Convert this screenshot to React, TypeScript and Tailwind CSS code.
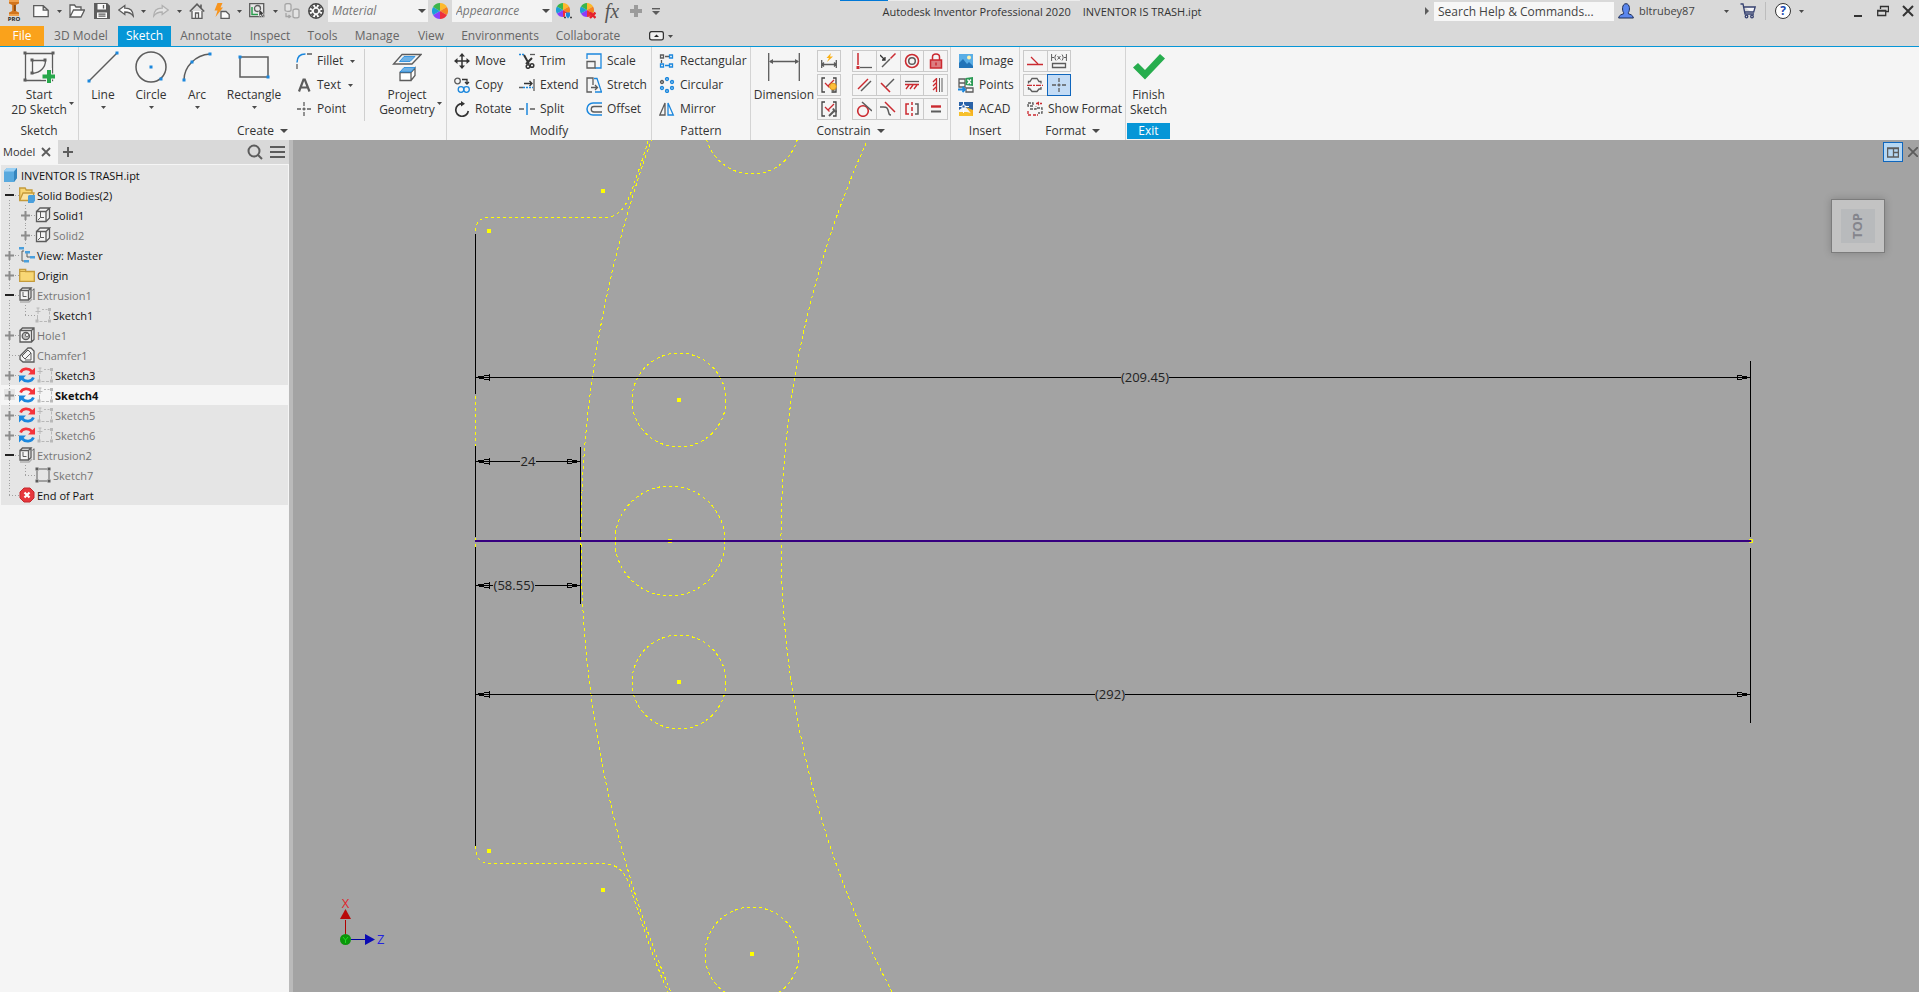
import React from "react";

const G = "#5c5c5c";
const B = "#1b87dd";
const R = "#cb2a30";

type IcoProps = { children: React.ReactNode; w?: number; h?: number; s?: string };

function Ico({ children, w = 16, h = 16, s = G }: IcoProps) {
  return (
    <svg width={w} height={h} viewBox={`0 0 ${w} ${h}`} fill="none" stroke={s} strokeWidth="1.3" className="shrink-0" aria-hidden="true">
      {children}
    </svg>
  );
}

function Caret({ small = false }: { small?: boolean }) {
  return small ? (
    <svg width="5" height="3" viewBox="0 0 5 3" className="shrink-0" aria-hidden="true">
      <path d="M0 0h5L2.500 3z" fill="#4a4a4a" />
    </svg>
  ) : (
    <svg width="8" height="4" viewBox="0 0 8 4" className="shrink-0" aria-hidden="true">
      <path d="M0 0h8L4 4z" fill="#4a4a4a" />
    </svg>
  );
}

function Dot({ x, y, c = B }: { x: number; y: number; c?: string }) {
  return <rect x={x - 1.5} y={y - 1.5} width="3" height="3" fill={c} stroke="none" />;
}

const wheelColors = ["#fdb92b", "#f58220", "#ee2f3c", "#8a3ffc", "#1c9fd8", "#3cb54a"];

function Wheel({ cx = 8, cy = 8, r = 8 }: { cx?: number; cy?: number; r?: number }) {
  return (
    <g stroke="none">
      {wheelColors.map((c, i) => {
        const a0 = ((i * 60 - 90) * Math.PI) / 180;
        const a1 = (((i + 1) * 60 - 90) * Math.PI) / 180;
        return (
          <path
            key={c}
            fill={c}
            d={`M${cx} ${cy}L${cx + r * Math.cos(a0)} ${cy + r * Math.sin(a0)}A${r} ${r} 0 0 1 ${cx + r * Math.cos(a1)} ${cy + r * Math.sin(a1)}z`}
          />
        );
      })}
    </g>
  );
}

function Tool({ label, children, w = "w-6" }: { label: string; children: React.ReactNode; w?: string }) {
  return (
    <button type="button" aria-label={label} className={`flex h-full shrink-0 items-center justify-center ${w}`}>
      {children}
    </button>
  );
}

function StyleSelect({ label }: { label: string }) {
  return (
    <div className="relative h-[22px] w-[100px] shrink-0 bg-[#f3f3f3]">
      <select aria-label={label} className="h-full w-full appearance-none bg-transparent pl-1 text-xs text-[#777] italic outline-none">
        <option>{label}</option>
      </select>
      <span className="pointer-events-none absolute top-[9px] right-[2px] block">
        <Caret />
      </span>
    </div>
  );
}

function TitleBar() {
  return (
    <div className="relative flex h-[26px] items-start">
      <div className="absolute top-0 left-[840px] flex h-px">
        <span className="w-12 bg-[#0078d7]" />
        <span className="w-48 bg-[#ececec]" />
      </div>
      <div className="flex h-[22px] shrink-0 items-center">
        <Tool label="Inventor" w="w-7">
          <span className="flex flex-col items-center">
            <svg width="12" height="16" viewBox="0 0 12 16" aria-hidden="true">
              <path d="M1 0h10v3.500L7.800 5v6L11 12.500V16H1v-3.500L4.200 11V5L1 3.500z" fill="#d2741c" />
              <path d="M1 0h10v2H1zM1 14h10v2H1z" fill="#f0a04b" />
              <path d="M6 5h1.800v6H6z" fill="#8d4a10" />
            </svg>
            <span className="text-[6px] leading-[6px] font-bold text-[#222]">PRO</span>
          </span>
        </Tool>
        <Tool label="New" w="w-[26px]">
          <Ico><path d="M.7 2.700h9.500l5 4.500v6.500H.7zM10.200 2.700v4.500h5" fill="#fafafa" /></Ico>
        </Tool>
        <Tool label="New options" w="w-[10px]"><Caret small /></Tool>
        <Tool label="Open" w="w-[26px]">
          <Ico><path d="M1 14V2h4.500l1.500 2h5v3M1 14l3.500-7H15.500L12 14z" fill="#fafafa" /></Ico>
        </Tool>
        <Tool label="Save">
          <Ico><path d="M.7.7h12.300l2.300 2.300v12.300H.7z" fill="#5c5c5c" /><path d="M3.500 1h8.500v5.500H3.500zM3 9.500h10V15H3z" fill="#fafafa" stroke="none" /><path d="M4.500 11.200h7M4.500 13.200h7M9.500 2v3.500" /></Ico>
        </Tool>
        <Tool label="Undo">
          <Ico><path d="M.8 7l6-4.500v2.700C12 5 15 8 15.300 13 13 9.800 10.500 9 6.800 9v2.500z" fill="#fafafa" /></Ico>
        </Tool>
        <Tool label="Undo history" w="w-[10px]"><Caret small /></Tool>
        <Tool label="Redo" w="w-[26px]">
          <Ico s="#b0b0b0"><path d="M15.200 7l-6-4.500v2.700C4 5 1 8 .7 13 3 9.800 5.500 9 9.200 9v2.500z" fill="#e2e2e2" /></Ico>
        </Tool>
        <Tool label="Redo history" w="w-[10px]"><Caret small /></Tool>
        <Tool label="Home" w="w-[26px]">
          <Ico><path d="M3 8v7.300h10V8" fill="#fafafa" /><path d="M.8 8.500L8 1.200l7.200 7.300M12 1.500v3.500" strokeWidth="1.600" /><path d="M6.500 15v-5h3v5" /></Ico>
        </Tool>
        <Tool label="Update">
          <Ico><path d="M3.500 0h5L6.500 4.500H9L1.500 14 3.500 7.500H.5z" fill="#f7941d" stroke="none" /><path d="M7 8.500h5l3.200 3v4H7z" fill="#fafafa" /></Ico>
        </Tool>
        <Tool label="Update options" w="w-[10px]"><Caret small /></Tool>
        <Tool label="Select" w="w-[26px]">
          <Ico><path d="M.7.700h14v13H.7z" fill="#e8e8e8" /><path d="M3 4v7.500h6" stroke="#2a9d4e" strokeWidth="1.500" /><circle cx="8.500" cy="5.500" r="3" /><path d="M10 6v7.500l1.800-1.700 1.200 3 1.500-.7-1.300-2.900H15.500z" fill="#3c3c3c" stroke="#fff" strokeWidth=".5" /></Ico>
        </Tool>
        <Tool label="Select options" w="w-[10px]"><Caret small /></Tool>
        <Tool label="Bodies">
          <Ico s="#a5a5a5"><path d="M1 2c0-2 6-2 6 0v5c0 1.800-6 1.800-6 0zM9 7.500c0-2 6-2 6 0v6c0 1.800-6 1.800-6 0z" fill="#e3e3e3" /><path d="M2 10v3.500h4M4.500 12l2 1.500-2 1.500" /></Ico>
        </Tool>
        <Tool label="Adjust wheel">
          <Ico><circle cx="8" cy="8" r="7.200" fill="#fafafa" stroke="#444" strokeWidth="1.500" /><circle cx="8" cy="8" r="2.200" fill="#555" stroke="none" /><path d="M3.500 3.500l2 2M12.500 3.500l-2 2M3.500 12.500l2-2M12.500 12.500l-2-2" stroke="#555" strokeWidth="2.600" /><path d="M1 8h2.500M12.500 8H15M8 1v2.500M8 12.500V15" stroke="#555" strokeWidth="2" /></Ico>
        </Tool>
        <StyleSelect label="Material" />
        <Tool label="Material browser"><Ico><Wheel /></Ico></Tool>
        <StyleSelect label="Appearance" />
        <Tool label="Adjust appearance"><Ico><Wheel cx={7} cy={7} r={7} /><path d="M9 10h7v6H9z" fill="#d9d9d9" stroke="none" /><path d="M10 9.500h4V13l-2 2.500L10 13z" fill={B} stroke="none" /><path d="M8 14.500h2M14 14.500h2" stroke="#444" /></Ico></Tool>
        <Tool label="Clear appearance"><Ico><Wheel cx={7} cy={7} r={7} /><path d="M10 9.500l5.500 5.500M15.500 9.500L10 15" stroke="#e5202b" strokeWidth="2.400" /></Ico></Tool>
        <Tool label="Parameters"><span className="font-[Liberation_Serif,serif] text-[20px] leading-4 text-[#555] italic">fx</span></Tool>
        <Tool label="Add"><Ico w={12} h={12}><path d="M6 0v12M0 6h12" stroke="#9b9b9b" strokeWidth="4" /></Ico></Tool>
        <Tool label="Customize" w="w-4"><Ico w={8} h={7}><path d="M0 .7h8" strokeWidth="1.400" /><path d="M0 3h8L4 7z" fill={G} stroke="none" /></Ico></Tool>
      </div>
      <h1 className="flex h-6 flex-1 items-center justify-center gap-3 text-[11px] whitespace-nowrap text-[#333]">
        <span>Autodesk Inventor Professional 2020</span>
        <span>INVENTOR IS TRASH.ipt</span>
      </h1>
      <div className="flex h-[22px] w-[499px] shrink-0 items-center">
        <Tool label="Collapse search" w="w-[14px]"><Ico w={4} h={8}><path d="M0 0l4 4-4 4z" fill={G} stroke="none" /></Ico></Tool>
        <input aria-label="Search" placeholder="Search Help & Commands..." className="mt-px h-[19px] w-[180px] bg-[#f7f7f7] px-1 text-xs outline-none placeholder:text-[#444]" />
        <button type="button" className="flex h-full w-[98px] items-center gap-[5px] pl-1 text-[11px] text-[#444]">
          <Ico><path d="M.6 15c.5-3 3-3.500 5-4.200v-1.300C4 7.800 3.800.7 8 .7s4 7.100 2.400 8.800v1.300c2 .7 4.500 1.200 5 4.200z" fill="#5b87ee" stroke="#1d2c55" strokeWidth="1" /></Ico>
          <span>bltrubey87</span>
        </button>
        <Tool label="Account options" w="w-7"><Caret small /></Tool>
        <Tool label="Cart" w="w-4">
          <Ico s="#35406f"><path d="M.5 1h2.500l2 10h9M3.500 4h11.700l-1.500 5H4.500" fill="#f4f4f8" /><circle cx="6.500" cy="13.500" r="1.300" /><circle cx="12" cy="13.500" r="1.300" /></Ico>
        </Tool>
        <span className="mx-[9px] h-[18px] w-px bg-[#bdbdbd]" />
        <Tool label="Help" w="w-4">
          <span className="flex size-4 items-center justify-center rounded-full border border-[#333] bg-white text-xs leading-3 font-bold text-[#1c49b0]">?</span>
        </Tool>
        <Tool label="Help options" w="w-5"><Caret small /></Tool>
        <div className="ml-auto flex">
          <Tool label="Minimize" w="w-[22px]"><Ico w={12} h={12}><path d="M2 11h8" stroke="#333" strokeWidth="2" /></Ico></Tool>
          <Tool label="Restore" w="w-7"><Ico w={12} h={12} s="#333"><path d="M3.500 4V1.500h8v5H9" /><path d="M.7 5.500h8v5h-8zM.7 6h8" /></Ico></Tool>
          <Tool label="Close" w="w-[22px]"><Ico w={12} h={12} s="#333"><path d="M1 1l10 10M11 1L1 11" strokeWidth="2" /></Ico></Tool>
        </div>
      </div>
    </div>
  );
}

const tabs: [string, string][] = [
  ["File", "w-11 bg-[#faa21b] text-white"],
  ["3D Model", "w-[74px] text-[#666]"],
  ["Sketch", "w-[53px] bg-[#0696d7] text-white"],
  ["Annotate", "w-[70px] text-[#666]"],
  ["Inspect", "w-[58px] text-[#666]"],
  ["Tools", "w-[47px] text-[#666]"],
  ["Manage", "w-[62px] text-[#666]"],
  ["View", "w-[46px] text-[#666]"],
  ["Environments", "w-[92px] text-[#666]"],
  ["Collaborate", "w-[84px] text-[#666]"],
];

function Tabs() {
  return (
    <nav className="flex h-[21px] items-stretch border-b border-[#0696d7]">
      {tabs.map(([t, c]) => (
        <a key={t} href="#" className={`flex items-center justify-center whitespace-nowrap ${c}`}>
          {t}
        </a>
      ))}
      <button type="button" aria-label="Ribbon display" className="ml-[19px] flex items-center gap-1">
        <Ico w={15} h={10}><rect x=".6" y=".6" width="13.800" height="8.300" rx="2" fill="#f0f0f0" stroke="#333" /><path d="M5 6h5L7.500 3.500z" fill="#222" stroke="none" /></Ico>
        <Caret small />
      </button>
    </nav>
  );
}

function Group({ label, w, caret = false, exit = false, children }: { label: string; w: string; caret?: boolean; exit?: boolean; children: React.ReactNode }) {
  return (
    <section aria-label={label} className={`flex shrink-0 flex-col ${exit ? "" : "border-r border-[#d4d4d4]"} ${w}`}>
      <div className="mt-0.5 flex h-[72px]">{children}</div>
      <div className={`flex flex-1 items-center justify-center gap-1.5 ${exit ? "mx-px mt-0.5 mb-px bg-[#0696d7] text-white" : ""}`}>
        <span>{label}</span>
        {caret && <Caret />}
      </div>
    </section>
  );
}

function Big({ lines, w, icon, caret }: { lines: string[]; w: string; icon: React.ReactNode; caret?: "below" | "side" }) {
  return (
    <button type="button" className={`relative flex shrink-0 flex-col items-center leading-[15px] ${w}`}>
      <span className="mb-0.5 flex h-9 items-center justify-center">{icon}</span>
      {lines.map((l) => (
        <span key={l} className="whitespace-nowrap">{l}</span>
      ))}
      {caret === "below" && <span className="mt-1"><Caret small /></span>}
      {caret === "side" && <span className="absolute right-1 bottom-4"><Caret small /></span>}
    </button>
  );
}

function Row({ label, icon, caret = false }: { label: string; icon: React.ReactNode; caret?: boolean }) {
  return (
    <button type="button" className="flex h-6 items-center gap-[5px] whitespace-nowrap">
      {icon}
      <span>{label}</span>
      {caret && <span className="ml-0.5"><Caret small /></span>}
    </button>
  );
}

function Cell({ label, icon, on = false }: { label: string; icon: React.ReactNode; on?: boolean }) {
  return (
    <button type="button" aria-label={label} className={`flex flex-1 items-center justify-center ${on ? "bg-[#c3dbf5] outline outline-[#0f66bd]" : ""}`}>
      {icon}
    </button>
  );
}

function Cells({ w, children }: { w: string; children: React.ReactNode }) {
  return <div className={`flex h-[22px] divide-x divide-[#cacaca] border border-[#cacaca] ${w}`}>{children}</div>;
}

const brackets = <path d="M4 1H1v14h3M12 1h3v14h-3" stroke="#444" />;
const redTick = <path d="M4 6l4.500 4.500M7 9l6-6" />;

function Ribbon() {
  return (
    <div className="flex h-[93px] bg-[#f5f5f5] text-[#333]">
      <Group label="Sketch" w="w-[79px]">
        <Big
          lines={["Start", "2D Sketch"]}
          w="w-[78px]"
          caret="side"
          icon={
            <Ico w={32} h={32}>
              <path d="M2.500 2.500h27v27h-27z" />
              <path d="M9.500 9.500h13M9.500 9.500v13M22.500 9.500c0 7-5 12-13 13" />
              {[[2, 2], [30, 2], [2, 29], [9, 9], [22, 9], [9, 22]].map(([x, y]) => <Dot key={`${x}-${y}`} x={x} y={y} c={G} />)}
              <path d="M26 17v15M18 25.500h14" stroke="#f5f5f5" strokeWidth="6" />
              <path d="M26 19v13M19.500 25.500h13" stroke="#27a84b" strokeWidth="4" />
            </Ico>
          }
        />
      </Group>
      <Group label="Create" w="w-[368px]" caret>
        <Big lines={["Line"]} w="w-12" caret="below" icon={<Ico w={32} h={32}><path d="M2 30L30 2" strokeWidth="1.500" /><Dot x={2} y={30} /><Dot x={30} y={2} /></Ico>} />
        <Big lines={["Circle"]} w="w-12" caret="below" icon={<Ico w={32} h={32}><circle cx="16" cy="16" r="15" strokeWidth="1.500" /><Dot x={16} y={16} /><Dot x={26} y={28} /></Ico>} />
        <Big lines={["Arc"]} w="w-11" caret="below" icon={<Ico w={32} h={32}><path d="M3 29C3 16 14 4 29 3" strokeWidth="1.500" /><Dot x={3} y={29} /><Dot x={11} y={11} /><Dot x={29} y={3} /></Ico>} />
        <Big lines={["Rectangle"]} w="w-[70px]" caret="below" icon={<Ico w={32} h={32}><path d="M2 6h28v20H2z" strokeWidth="1.500" /><Dot x={2} y={6} /><Dot x={30} y={26} /></Ico>} />
        <div className="w-[76px] shrink-0 border-r border-[#cfcfcf] pl-[7px]">
          <Row label="Fillet" caret icon={<Ico><path d="M1 16v-5M11 1h5" /><path d="M1 9.500C1 4 4 1 9.500 1" stroke={B} strokeWidth="1.500" /></Ico>} />
          <Row label="Text" caret icon={<Ico><path d="M3 14.500L7.500 2.500h1.300L13.500 14.500M5 10.500h6.500" strokeWidth="2.200" /></Ico>} />
          <Row label="Point" icon={<Ico><path d="M8 1v4M8 6.500v3M8 11v4M1 8h4M6.500 8h3M11 8h4" /></Ico>} />
        </div>
        <div className="flex flex-1 justify-end">
          <Big
            lines={["Project", "Geometry"]}
            w="w-[78px]"
            caret="side"
            icon={
              <Ico w={30} h={30}>
                <path d="M10 2.500h19L20 12H1.500z" /><path d="M12 4.500h11l-5 5H7.500z" fill="#6fb1e4" stroke={B} strokeWidth=".8" />
                <path d="M8 20.500h11v8H8zM19 28.500l4-5V16l-4 4.500" fill="#fff" /><path d="M8 20l4-4.500h11L19 20z" fill="#6fb1e4" stroke={B} strokeWidth=".8" />
              </Ico>
            }
          />
        </div>
      </Group>
      <Group label="Modify" w="w-[205px]">
        <div className="w-[65px] pl-[7px]">
          <Row label="Move" icon={<Ico s="#333"><path d="M8 1v14M1 8h14" strokeWidth="1.500" /><path d="M8 0l3 3.500H5zM8 16l3-3.500H5zM0 8l3.500-3v6zM16 8l-3.500-3v6z" fill="#333" stroke="none" /></Ico>} />
          <Row label="Copy" icon={<Ico><circle cx="3.500" cy="4" r="2.800" /><path d="M8 2.500h5V7M11 5l2 2 2-2" stroke="#333" /><circle cx="7" cy="12.500" r="2.800" stroke={B} /><circle cx="12.500" cy="12.500" r="2.800" stroke={B} /></Ico>} />
          <Row label="Rotate" icon={<Ico s="#333"><path d="M8 2.700a6.300 6.300 0 1 0 6.300 7.300" strokeWidth="1.700" /><path d="M7 0v5.500L11 2.700z" fill="#333" stroke="none" /></Ico>} />
        </div>
        <div className="w-[67px] pl-[7px]">
          <Row label="Trim" icon={<Ico><path d="M0 1.500h6" stroke={B} strokeDasharray="2 1" /><path d="M11 1.500h5" /><path d="M5 2l5 9M13 5l-6 6" stroke="#333" strokeWidth="2" /><circle cx="9" cy="13.500" r="1.800" stroke="#333" strokeWidth="1.500" /><circle cx="13" cy="12.500" r="1.800" stroke="#333" strokeWidth="1.500" /></Ico>} />
          <Row label="Extend" icon={<Ico><path d="M0 10.500h4M15 2v12" /><path d="M4 10.500h10" stroke={B} strokeDasharray="2 1" /><path d="M5 6.500h8M10.500 4l2.500 2.500L10.500 9" stroke="#333" /></Ico>} />
          <Row label="Split" icon={<Ico><path d="M0 8h5M11 8h5" /><path d="M8 2v12" stroke={B} strokeWidth="1.500" /></Ico>} />
        </div>
        <div className="pl-[7px]">
          <Row label="Scale" icon={<Ico><path d="M1 6V1h14v14h-6" stroke={B} /><path d="M1 8.500h8V15H1z" /></Ico>} />
          <Row label="Stretch" icon={<Ico><path d="M6 15H1V1h6v7M5 10.500h6M9 8l2.500 2.500L9 13" /><path d="M8 1.500h3L15.500 15H9" stroke={B} /></Ico>} />
          <Row label="Offset" icon={<Ico><path d="M16 2H7a6 6 0 0 0 0 12h9" stroke={B} strokeWidth="1.500" /><path d="M16 5.500H8a2.700 2.700 0 0 0 0 5.500h8" /></Ico>} />
        </div>
      </Group>
      <Group label="Pattern" w="w-[99px]">
        <div className="pl-[7px]">
          <Row label="Rectangular" icon={<Ico><path d="M1.500 2h3v3h-3zM6 3.500h4M2.500 7v3" /><path d="M10.500 2h3v3h-3zM1.500 11h3v3h-3zM10.500 11h3v3h-3zM6 12.500h4" stroke={B} /></Ico>} />
          <Row label="Circular" icon={<Ico><circle cx="8" cy="2" r="1.500" fill="#9ccbf0" stroke={B} /><circle cx="13" cy="5" r="1.500" fill="#9ccbf0" stroke={B} /><circle cx="13" cy="11" r="1.500" fill="#9ccbf0" stroke={B} /><circle cx="8" cy="14" r="1.500" fill="#9ccbf0" stroke={B} /><circle cx="3" cy="11" r="1.500" fill="#9ccbf0" stroke={B} /><circle cx="3" cy="5" r="1.500" fill="#bbb" /></Ico>} />
          <Row label="Mirror" icon={<Ico><path d="M6 2v12H.8z" /><path d="M9 2v12h5.300z" stroke={B} /></Ico>} />
        </div>
      </Group>
      <Group label="Constrain" w="w-[200px]" caret>
        <Big lines={["Dimension"]} w="w-[66px]" icon={<Ico w={32} h={32}><path d="M.7 2v28M31.300 2v28M2 10.500h28" /><path d="M1 10.500l4-2.500v5zM31 10.500L27 8v5z" fill={G} stroke="none" /></Ico>} />
        <div className="flex w-[35px] flex-col gap-0.5 pt-px">
          <Cells w="w-6"><Cell label="Automatic dimensions" icon={<Ico><path d="M.7 7v8M15.300 7v8M1 11.500h14M3 9.500l-2 2 2 2M13 9.500l2 2-2 2" /><path d="M10 0L5.500 5H8L6 9l6-5.500H9z" fill="#fbb116" stroke="none" /></Ico>} /></Cells>
          <Cells w="w-6"><Cell label="Show constraints" icon={<Ico s={R}>{brackets}{redTick}<path d="M12 12v4" stroke="#666" strokeWidth="3" /><circle cx="12" cy="9.500" r="3.300" fill="#fdbf3b" stroke="#e09a1c" strokeWidth="1" /></Ico>} /></Cells>
          <Cells w="w-6"><Cell label="Constraint settings" icon={<Ico s={R}>{brackets}{redTick}<path d="M8 15l5-5M12 7.500l1.500 2.500 2.500.5" stroke={G} strokeWidth="2" /></Ico>} /></Cells>
        </div>
        <div className="flex flex-col gap-0.5 pt-px">
          <Cells w="w-24">
            <Cell label="Coincident" icon={<Ico><path d="M2 0v12" stroke={R} strokeWidth="1.500" /><path d="M4 14.500h12" /><Dot x={2} y={14.5} c={R} /></Ico>} />
            <Cell label="Collinear" icon={<Ico><path d="M2 14L10 6" strokeWidth="1.500" /><path d="M10.500 5.500l5-5" stroke={R} strokeWidth="1.500" /><path d="M0 2l5 5M5 4v3H2" stroke="#333" /></Ico>} />
            <Cell label="Concentric" icon={<Ico><circle cx="8" cy="8" r="6.500" stroke={R} strokeWidth="1.600" /><circle cx="8" cy="8" r="3.300" strokeWidth="1.500" /></Ico>} />
            <Cell label="Fix" icon={<Ico s={R}><path d="M2.500 7h11v8h-11z" fill="#dc7d80" strokeWidth="1.500" /><path d="M4.500 7V4c0-4 7-4 7 0v3M8 9.500v3" strokeWidth="1.500" /></Ico>} />
          </Cells>
          <Cells w="w-24">
            <Cell label="Parallel" icon={<Ico><path d="M2 12L12 2" stroke={R} strokeWidth="1.500" /><path d="M5 14L15 4" strokeWidth="1.500" /></Ico>} />
            <Cell label="Perpendicular" icon={<Ico><path d="M1 6l9 9" stroke={R} strokeWidth="1.600" /><path d="M6 10l8-8" strokeWidth="1.500" /></Ico>} />
            <Cell label="Horizontal" icon={<Ico><path d="M1 4.500h14" /><path d="M1 7.500h14M5 8l-3 4M9 8l-3 4M13 8l-3 4" stroke={R} /></Ico>} />
            <Cell label="Vertical" icon={<Ico><path d="M11.500 1v14M14 1v14" strokeWidth="1" /><path d="M8.500 1v14M8 2L5 5M8 6L5 9M8 10l-3 3" stroke={R} /></Ico>} />
          </Cells>
          <Cells w="w-24">
            <Cell label="Tangent" icon={<Ico><circle cx="7" cy="10" r="5.300" stroke={R} strokeWidth="1.600" /><path d="M6 1l10 9" strokeWidth="1.500" /></Ico>} />
            <Cell label="Smooth" icon={<Ico><path d="M0 6c4 0 7-1 8 3s1 5 3 5" strokeWidth="1.500" /><path d="M5 1l10 10" stroke={R} strokeWidth="1.500" /></Ico>} />
            <Cell label="Symmetric" icon={<Ico><path d="M5 3H2v10h3M8 1v3M8 6v4M8 12v3" stroke={R} strokeWidth="1.500" /><path d="M11 3h3v10h-3" strokeWidth="1.500" /></Ico>} />
            <Cell label="Equal" icon={<Ico><path d="M3 5.500h10" stroke={R} strokeWidth="2.400" /><path d="M3 10.500h10" strokeWidth="2" /></Ico>} />
          </Cells>
        </div>
      </Group>
      <Group label="Insert" w="w-[69px]">
        <div className="pl-[7px]">
          <Row label="Image" icon={<Ico><path d="M1 1h14v14H1z" fill="#5aaee6" stroke="none" /><path d="M1 10l4-4 4 5 2-2 4 4v2H1z" fill="#2374b8" stroke="none" /><circle cx="11" cy="4.500" r="2" fill="#fff3b0" stroke="none" /></Ico>} />
          <Row label="Points" icon={<Ico><path d="M1 2h6v8H1zM1 6h6M8 11h7v4H8z" /><path d="M7.500 1L15 0v9l-7.500-1z" fill="#2b9a55" stroke="none" /><path d="M9.500 2.500l3.500 4.500M13 2.500L9.500 7" stroke="#fff" /><path d="M0 12.500h7M4.500 10L7 12.500 4.500 15" stroke={B} strokeWidth="1.800" /></Ico>} />
          <Row label="ACAD" icon={<Ico><path d="M1 1h14v10L6 5.500 1 9z" fill="#2b63a8" stroke="none" /><path d="M1 11h8l6 1.500V15H1z" fill="#f6c02c" stroke="none" /><path d="M8 6l7 3v6z" fill="#f6b11f" stroke="none" /><path d="M5.500 0v12M0 5.500h11" stroke="#fff" strokeWidth="1" /><path d="M4 4h3v3H4z" fill="#2b63a8" stroke="#fff" strokeWidth=".8" /></Ico>} />
        </div>
      </Group>
      <Group label="Format" w="w-[106px]" caret>
        <div className="flex flex-col gap-0.5 pt-px pl-[3px]">
          <Cells w="w-12">
            <Cell label="Construction" icon={<Ico s={R}><path d="M0 11.500h16" strokeWidth="1.500" /><path d="M4 4l7 7" /></Ico>} />
            <Cell
              label="Driven dimension"
              icon={
                <Ico>
                  <path d="M.6 1v7M15.400 1v7M1 4.500h2M13 4.500h2" strokeWidth="1" />
                  <path d="M5 1.500c-1.500 2-1.500 4 0 6M11 1.500c1.500 2 1.500 4 0 6M6.500 3l3 3.500M9.500 3l-3 3.500" strokeWidth="1" />
                  <path d="M1.500 10.500h13v4h-13z" />
                </Ico>
              }
            />
          </Cells>
          <Cells w="w-12">
            <Cell label="Centerline" icon={<Ico><path d="M1.500 6.500V4.500h1.500l2-3h5l2 3h2v2M1.500 10v2h1.500l2 2.500h5l2-2.500h2v-2" /><path d="M0 8.300h16" stroke={R} strokeDasharray="5 1 2 1" /></Ico>} />
            <Cell label="Center point" on icon={<Ico><path d="M8 1v4M8 6.500v3M8 11v4M1 8h4M6.500 8h3M11 8h4" /></Ico>} />
          </Cells>
          <div className="-mt-px pl-1">
            <Row label="Show Format" icon={<Ico><path d="M1 2h5v3H1zM3 8h6V5.500M10 7h5v5h-4" strokeDasharray="3 1" /><path d="M9 2.500h6M12 1l-2 1.500L12 4M1 10v4h3M6 14h5" stroke={R} strokeDasharray="3 1" /></Ico>} />
          </div>
        </div>
      </Group>
      <Group label="Exit" w="w-[45px]" exit>
        <Big lines={["Finish", "Sketch"]} w="w-[45px]" icon={<Ico w={32} h={26}><path d="M0 13.500L5 9l7 7L27 0l5 4.500L12 25.500z" fill="#27ad4e" stroke="none" /></Ico>} />
      </Group>
    </div>
  );
}

type Guide = "line" | "plus" | "minus" | "tee" | "end";

function Gutter({ kind, w, c }: { kind: Guide; w: number; c: number }) {
  const toggles = kind === "plus" || kind === "minus";
  const drawing = (
    <svg width={w} height="20" viewBox={`0 0 ${w} 20`} fill="none" stroke="#a0a0a0" aria-hidden="true">
      <path d={`M${c + 0.5} 0V${kind === "end" ? 11 : 20}`} strokeDasharray="1 2" />
      {kind !== "line" && <path d={`M${c} 10.500H${w}`} strokeDasharray="1 2" />}
      {toggles && <rect x={c - 5} y="4" width="11" height="11" fill="#e5e5e5" stroke="none" />}
      {kind === "plus" && <path d={`M${c + 0.5} 6v9M${c - 4} 10.500h9`} stroke="#8c8c8c" strokeWidth="2" />}
      {kind === "minus" && <path d={`M${c - 4} 10h9`} stroke="#222" strokeWidth="2" />}
    </svg>
  );
  return toggles ? (
    <button type="button" aria-label={kind === "plus" ? "Expand" : "Collapse"} className="shrink-0">{drawing}</button>
  ) : (
    <span className="shrink-0">{drawing}</span>
  );
}

const blueCube = <Ico w={15} h={16}><path d="M1 4l3-3h10v10l-3 4H1z" fill="#58a9de" stroke="none" /><path d="M1 4l3-3h10l-3 3.500H1z" fill="#9bd0f3" stroke="none" /><path d="M11 4.500L14 1v10l-3 4z" fill="#3585bd" stroke="none" /></Ico>;
const solid = <Ico><path d="M1.500 4.500h9.500v10H1.500zM1.500 4.500L5 1h9.500L11 4.500M14.500 1v10L11 14.500" fill="#f4f4f4" /><path d="M5.500 5v5.500H9M5.500 10.500L3 13" strokeWidth="1" /></Ico>;
const folder = <Ico><path d="M.7 2.500h6v2h8.600v9.800H.7z" fill="#f8d775" stroke="#c49a3a" /><path d="M1 4.500h6" stroke="#c49a3a" strokeWidth="1" /></Ico>;
const bodies = <Ico><path d="M.7 13.500V1h5.500l1 2H13v3" fill="#f8d775" stroke="#c49a3a" /><path d="M.7 13.500L4 6h11l-2 7.500z" fill="#fbe3a0" stroke="#c49a3a" /><path d="M9 9l1-1h6v5.500L14.500 16H9z" fill="#4a9fdc" stroke="none" /></Ico>;
const view = <Ico><path d="M5 4H3v10h2M8 6v4h3" strokeWidth="1" /><path d="M0 0h5v2.500H0zM6 4h5v2.500H6zM11 9h5v2.500h-5zM5 13h5v2.500H5z" fill="#4a9fdc" stroke="none" /></Ico>;
const extrusion = <Ico><path d="M1 3.500h8.500v9.500H1zM1 3.500L3.500 1H12L9.500 3.500M12 1v9.500L9.500 13" fill="#f4f4f4" /><path d="M4 5v4.500h3.500" strokeWidth="1" /><path d="M15 2v11M13.500 3.500L15 1.500" strokeWidth="1" /><path d="M1 15h9l3-3" stroke="#b0b0b0" strokeWidth="1.500" /></Ico>;
const hole = <Ico><path d="M1 3.500h11.500v11.500H1zM1 3.500L3.500 1H15v11.500L12.500 15M12.500 3.500L15 1" fill="#f4f4f4" /><circle cx="6.800" cy="9" r="3.600" fill="#bdbdbd" /><circle cx="8" cy="8" r="1.700" fill="#eee" strokeWidth=".8" /></Ico>;
const chamfer = <Ico><path d="M1 9l8-8h3l3 3v11H4L1 12.500z" fill="#f4f4f4" /><path d="M3 9l6-6 3 3-6 6zM12 6v7H6" strokeWidth="1" /></Ico>;
const sketchFaint = (
  <Ico s="#b8b8b8"><path d="M7 2.500h2M10.500 2.500h2M2.500 8v5M4.500 14.500h3M9 14.500h3M14.500 4.500v3M14.500 9v3M3 1v6M.5 4.500h5M1.500 1h3" strokeWidth="1" /><Dot x={14.5} y={2.5} c="#b8b8b8" /><Dot x={2} y={14} c="#b8b8b8" /><Dot x={14.5} y={14} c="#b8b8b8" /></Ico>
);
const sketchPlain = (
  <Ico><path d="M2 4v8M14 4v8M4 2h8M4 14h8" strokeWidth="1" /><Dot x={2} y={2} c={G} /><Dot x={14} y={2} c={G} /><Dot x={2} y={14} c={G} /><Dot x={14} y={14} c={G} /></Ico>
);
const refresh = (
  <Ico><path d="M1.500 5.500c2-4.500 8-5 11.500-1" stroke="#f5333a" strokeWidth="2.800" /><path d="M16 .5v7H9z" fill="#f5333a" stroke="none" /><path d="M14.500 10.500c-2 4.500-8 5-11.500 1" stroke="#1b87dd" strokeWidth="2.800" /><path d="M0 15.500v-7h7z" fill="#1b87dd" stroke="none" /></Ico>
);
const stop = (
  <Ico><path d="M5 1h6l4 4v6l-4 4H5l-4-4V5z" fill="#e6373c" stroke="#c4282d" strokeWidth="1" /><path d="M5.500 5.500l5 5M10.500 5.500l-5 5" stroke="#fff" strokeWidth="2.200" /></Ico>
);

type Node = { t: string; g: Guide; sub?: Guide; icons: React.ReactNode[]; dim?: boolean; on?: boolean };

const nodes: Node[] = [
  { t: "Solid Bodies(2)", g: "minus", icons: [bodies] },
  { t: "Solid1", g: "line", sub: "plus", icons: [solid] },
  { t: "Solid2", g: "line", sub: "plus", icons: [solid], dim: true },
  { t: "View: Master", g: "plus", icons: [view] },
  { t: "Origin", g: "plus", icons: [folder] },
  { t: "Extrusion1", g: "minus", icons: [extrusion], dim: true },
  { t: "Sketch1", g: "line", sub: "end", icons: [sketchFaint] },
  { t: "Hole1", g: "plus", icons: [hole], dim: true },
  { t: "Chamfer1", g: "tee", icons: [chamfer], dim: true },
  { t: "Sketch3", g: "plus", icons: [refresh, sketchFaint] },
  { t: "Sketch4", g: "plus", icons: [refresh, sketchFaint], on: true },
  { t: "Sketch5", g: "plus", icons: [refresh, sketchFaint], dim: true },
  { t: "Sketch6", g: "plus", icons: [refresh, sketchFaint], dim: true },
  { t: "Extrusion2", g: "minus", icons: [extrusion], dim: true },
  { t: "Sketch7", g: "line", sub: "end", icons: [sketchPlain], dim: true },
  { t: "End of Part", g: "end", icons: [stop] },
];

function Browser() {
  return (
    <aside className="flex w-[293px] shrink-0 flex-col border-r-4 border-[#bababa] bg-[#f5f5f5]">
      <div className="flex h-6 shrink-0 items-center bg-[#d9d9d9]">
        <div className="flex h-full w-[58px] items-center justify-between bg-[#f5f5f5] pr-[7px] pl-[3px] text-[11px] text-[#333]">
          <span>Model</span>
          <button type="button" aria-label="Close Model"><Ico w={10} h={10}><path d="M1 1l8 8M9 1L1 9" strokeWidth="1.800" /></Ico></button>
        </div>
        <Tool label="Add panel" w="w-5"><Ico w={10} h={10}><path d="M5 0v10M0 5h10" strokeWidth="2" /></Ico></Tool>
        <div className="ml-auto flex items-center gap-[7px] pr-1">
          <button type="button" aria-label="Search tree"><Ico><circle cx="7" cy="7" r="5.500" strokeWidth="2" /><path d="M11 11l4 4" strokeWidth="2" /></Ico></button>
          <button type="button" aria-label="Menu"><Ico w={15} h={14}><path d="M0 2h15M0 7h15M0 12h15" strokeWidth="2" /></Ico></button>
        </div>
      </div>
      <ul className="mt-px mr-px ml-px bg-[#e5e5e5] text-[11px] leading-[18px] text-[#111]">
        <li className="flex h-5 items-center gap-[3px] pl-[2px]">
          {blueCube}
          <span className="pt-0.5 whitespace-nowrap">INVENTOR IS TRASH.ipt</span>
        </li>
        {nodes.map((n) => (
          <li key={n.t} className={`flex h-5 items-center whitespace-nowrap ${n.on ? "bg-[#f5f5f5] font-bold" : ""} ${n.dim ? "text-[#757575]" : ""}`}>
            <Gutter kind={n.g} w={18} c={8} />
            {n.sub && <Gutter kind={n.sub} w={16} c={6} />}
            <span className="flex gap-0.5 pr-0.5">
              {n.icons.map((icon, i) => (
                <React.Fragment key={i}>{icon}</React.Fragment>
              ))}
            </span>
            <span className="pt-0.5">{n.t}</span>
          </li>
        ))}
      </ul>
    </aside>
  );
}

function Arrow({ x, y, dir }: { x: number; y: number; dir: 1 | -1 }) {
  return (
    <g shapeRendering="crispEdges">
      <path d={`M${x} ${y}l${13 * dir} -2.500v5z`} fill="none" stroke="#000" />
      <path d={`M${x} ${y}l${7 * dir} -1.500v3z`} fill="#000" stroke="none" />
    </g>
  );
}

type Dim = { y: number; x0: number; x1: number; cx: number; half: number; t: string };

const dims: Dim[] = [
  { y: 377.5, x0: 476, x1: 1750, cx: 1145, half: 24, t: "(209.45)" },
  { y: 461.5, x0: 476, x1: 580, cx: 528, half: 8, t: "24" },
  { y: 585.5, x0: 476, x1: 580, cx: 514, half: 21, t: "(58.55)" },
  { y: 694.5, x0: 476, x1: 1750, cx: 1110, half: 15, t: "(292)" },
];

const points = [[603, 191], [489, 231], [679, 400], [679, 682], [752, 954], [489, 851], [603, 890]];
const circles = [[679, 400, 47], [679, 682, 47], [670, 541, 55], [752, 127, 47], [752, 954, 47]];

function Canvas() {
  return (
    <main className="relative flex-1 overflow-hidden bg-[#a3a3a3]">
      <svg className="absolute inset-0 h-full w-full" role="img" aria-label="Sketch4 drawing">
        <g transform="translate(-293 -140)">
          <g fill="none" stroke="#ffff00" strokeDasharray="3 3" shapeRendering="crispEdges">
            <path d="M670.500 991A1170 1170 0 0 1 581 541 1170 1170 0 0 1 651.500 140" />
            <path d="M892 992A970 970 0 0 1 781 541 970 970 0 0 1 867.500 140" />
            <path d="M475.500 231c0-9 5-13.500 14-13.500H604c14 0 21-9 27-25 6-17 12-34 17.500-53" />
            <path d="M475.500 846c0 11 5 17.500 14 17.500H602c16 0 23 9 28 23 12 37 24 75 38 105" />
            <path d="M475.500 396v50M475.500 538v10M580.500 537v8" />
            {circles.map(([x, y, r]) => (
              <circle key={`${x}-${y}`} cx={x} cy={y} r={r} />
            ))}
          </g>
          <g stroke="#000" shapeRendering="crispEdges">
            <path d="M475.500 234v160M475.500 446v91M475.500 547v299M580.500 447v90M580.500 545v59M1750.500 361v176M1750.500 548v175" />
            {dims.map((d) => (
              <path key={d.t} d={`M${d.x0} ${d.y}H${d.cx - d.half}M${d.cx + d.half} ${d.y}H${d.x1}`} />
            ))}
          </g>
          {dims.map((d) => (
            <g key={d.t}>
              <Arrow x={d.x0} y={d.y} dir={1} />
              <Arrow x={d.x1} y={d.y} dir={-1} />
              <text x={d.cx} y={d.y + 4.5} textAnchor="middle" fontSize="13" fill="#222">{d.t}</text>
            </g>
          ))}
          <path d="M1749.500 539.500h3v3h-3zM668 539.500h4M668 542.500h4" fill="none" stroke="#ffff00" />
          <path d="M475 541H1751" stroke="#36007f" strokeWidth="2" />
          {points.map(([x, y]) => (
            <rect key={`${x}-${y}`} x={x - 2} y={y - 2} width="4" height="4" fill="#ffff00" />
          ))}
          <path d="M345.500 940v-20" stroke="#b00000" />
          <path d="M340 919l5.500-10 5.500 10z" fill="#b80a0a" />
          <path d="M351 939.500h15" stroke="#0000a0" />
          <path d="M365 934l10 5.500-10 5.500z" fill="#0a0ab4" />
          <circle cx="345.500" cy="939.500" r="5.500" fill="#0c960c" />
          <path d="M343 937l2.500 3 2.500-3M345.500 940v3" stroke="#1fe01f" fill="none" />
          <text x="345.500" y="908" textAnchor="middle" fontSize="13" fill="#e0262c">X</text>
          <text x="377" y="944" fontSize="13" fill="#2323e0">Z</text>
        </g>
      </svg>
      <div className="absolute top-0.5 right-px flex items-center gap-[5px]">
        <button type="button" aria-label="Tile windows" className="flex size-5 items-center justify-center border border-[#0f66bd] bg-[#b5d7f3]">
          <Ico w={12} h={11}><path d="M.6 1h10.800v9H.6zM.6 1.500h10.800M6.500 1v9M6.500 5.500h5" /></Ico>
        </button>
        <button type="button" aria-label="Close view"><Ico w={10} h={10}><path d="M0 0l10 10M10 0L0 10" strokeWidth="1.800" /></Ico></button>
      </div>
      <button type="button" aria-label="View cube: top" className="absolute top-[59px] right-[34px] flex size-[54px] items-center justify-center border border-[#7c7c7c] bg-[#c3c3c3] shadow-[0_0_8px_rgba(0,0,0,0.2)]">
        <span className="flex size-[34px] -rotate-90 items-center justify-center bg-[#b8babc] text-[13px] font-bold text-[#84858c]">TOP</span>
      </button>
    </main>
  );
}

export default function App() {
  return (
    <div className="flex h-screen flex-col overflow-hidden font-['Open_Sans','Noto_Sans',sans-serif] text-xs">
      <header className="shrink-0 bg-[#d9d9d9]">
        <TitleBar />
        <Tabs />
        <Ribbon />
      </header>
      <div className="flex min-h-0 flex-1">
        <Browser />
        <Canvas />
      </div>
    </div>
  );
}
